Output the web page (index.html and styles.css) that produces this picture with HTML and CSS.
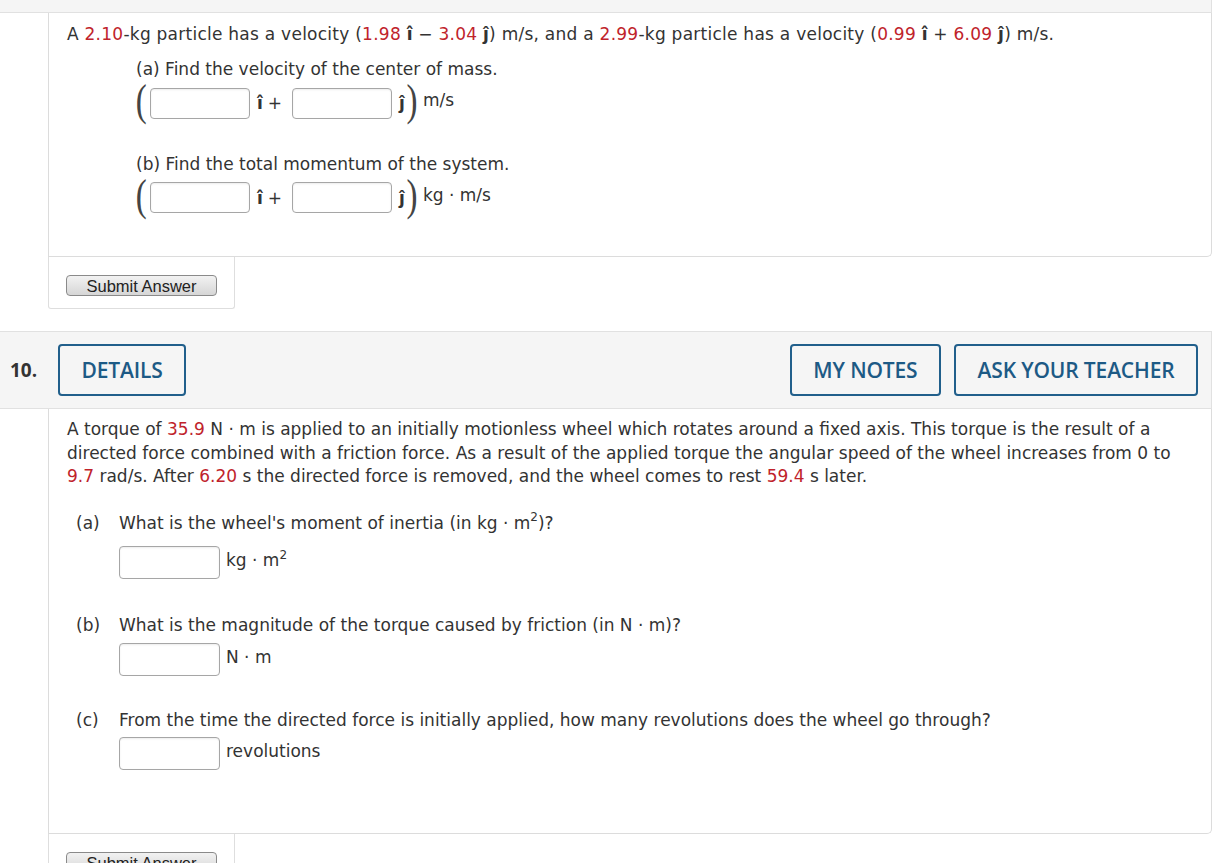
FILE: index.html
```html
<!DOCTYPE html>
<html>
<head>
<meta charset="utf-8">
<link rel="stylesheet" href="styles.css">
</head>
<body>
<div class="q">
  <div class="qhead stub"></div>
  <div class="qbody q9body">
    <p class="stem stem9">A <span class="r">2.10</span>-kg particle has a velocity (<span class="r">1.98</span> <b class="uv">î</b> − <span class="r">3.04</span> <b class="uv">ĵ</b>) m/s, and a <span class="r">2.99</span>-kg particle has a velocity (<span class="r">0.99</span> <b class="uv">î</b> + <span class="r">6.09</span> <b class="uv">ĵ</b>) m/s.</p>
    <div class="part9">
      <p class="ptext">(a) Find the velocity of the center of mass.</p>
      <div class="vec">
        <span class="paren">(</span><span class="box box9"></span><b class="uv ui">î</b><span class="plus">+</span><span class="box box9"></span><b class="uv uj">ĵ</b><span class="paren pr">)</span><span class="unit">m/s</span>
      </div>
    </div>
    <div class="part9 second">
      <p class="ptext">(b) Find the total momentum of the system.</p>
      <div class="vec">
        <span class="paren">(</span><span class="box box9"></span><b class="uv ui">î</b><span class="plus">+</span><span class="box box9"></span><b class="uv uj">ĵ</b><span class="paren pr">)</span><span class="unit">kg · m/s</span>
      </div>
    </div>
  </div>
  <div class="submit"><button class="sbtn">Submit Answer</button></div>
</div>

<div class="q q10">
  <div class="qhead main">
    <span class="qnum">10.</span>
    <span class="hbtn hfirst">DETAILS</span>
    <span class="spacer"></span>
    <span class="hbtn">MY NOTES</span>
    <span class="hbtn">ASK YOUR TEACHER</span>
  </div>
  <div class="qbody q10body">
    <p class="stem stem10">A torque of <span class="r">35.9</span> N · m is applied to an initially motionless wheel which rotates around a fixed axis. This torque is the result of a directed force combined with a friction force. As a result of the applied torque the angular speed of the wheel increases from 0 to <span class="r">9.7</span> rad/s. After <span class="r">6.20</span> s the directed force is removed, and the wheel comes to rest <span class="r">59.4</span> s later.</p>
    <div class="part pa">
      <span class="plabel">(a)</span>
      <div class="pmain">
        <p class="ptext">What is the wheel's moment of inertia (in kg · m<sup>2</sup>)?</p>
        <div class="ans"><span class="box box10"></span><span class="unit">kg · m<sup>2</sup></span></div>
      </div>
    </div>
    <div class="part pb">
      <span class="plabel">(b)</span>
      <div class="pmain">
        <p class="ptext">What is the magnitude of the torque caused by friction (in N · m)?</p>
        <div class="ans"><span class="box box10"></span><span class="unit">N · m</span></div>
      </div>
    </div>
    <div class="part pc">
      <span class="plabel">(c)</span>
      <div class="pmain">
        <p class="ptext">From the time the directed force is initially applied, how many revolutions does the wheel go through?</p>
        <div class="ans"><span class="box box10"></span><span class="unit">revolutions</span></div>
      </div>
    </div>
  </div>
  <div class="submit"><button class="sbtn">Submit Answer</button></div>
</div>
</body>
</html>
```

FILE: styles.css
```css
* { box-sizing: border-box; }
html, body { margin: 0; padding: 0; background: #fff; }
body {
  font-family: "DejaVu Sans", Verdana, sans-serif;
  font-size: 17px;
  color: #333;
  width: 1222px;
  height: 863px;
  overflow: hidden;
}
p { margin: 0; }
.r { color: #c0232b; }
.uv { font-weight: bold; }

.q { width: 1212px; }

.qhead {
  background: #f5f5f5;
  border: 1px solid #e1e1e1;
  border-left: none;
}
.qhead.stub {
  height: 13px;
  border-top: none;
}

.qbody {
  margin-left: 48px;
  border: 1px solid #dcdcdc;
  border-top: none;
  border-bottom-right-radius: 5px;
  background: #fff;
}
.q9body {
  height: 244px;
  padding: 10px 18px 0 18px;
}
.stem { line-height: 23.5px; }
.stem9 { letter-spacing: 0.25px; }

.part9 { margin-left: 69px; margin-top: 11px; }
.part9.second { margin-top: 32px; }
.part9 .ptext { line-height: 23.5px; }

.vec {
  display: flex;
  align-items: center;
  height: 36px;
  margin-top: 4px;
}
.part9.second .vec { margin-top: 3px; }
.paren {
  font-family: "Liberation Serif", serif;
  font-size: 44px;
  line-height: 36px;
  font-weight: normal;
  color: #444;
  display: inline-block;
  transform: scaleX(0.75);
  margin-top: -4px;
  width: 14px;
  text-align: center;
  margin-left: -2px;
}
.paren.pr { margin-left: 0; width: 12px; }
.box {
  display: inline-block;
  border: 1px solid #a6a6a6;
  border-radius: 4px;
  background: #fff;
  box-shadow: inset 0 1px 2px rgba(0,0,0,0.08);
}
.box9 { width: 100px; height: 31px; margin-left: 2px; }
.ui { margin-left: 7px; }
.plus { margin-left: 5px; margin-right: 8px; }
.uj { margin-left: 7px; }
.vec .unit { margin-left: 6px; margin-top: -6px; }

.submit {
  margin-left: 48px;
  width: 187px;
  height: 52px;
  border: 1px solid #dedede;
  border-top: none;
  border-bottom-left-radius: 3px;
  border-bottom-right-radius: 3px;
  padding: 18px 0 0 17px;
}
.sbtn {
  display: block;
  width: 151px;
  height: 21px;
  padding: 0;
  font-family: "Liberation Sans", Arial, sans-serif;
  font-size: 16.5px;
  color: #222;
  border: 1px solid #8a8a8a;
  border-radius: 4px;
  background: linear-gradient(#f2f2f2, #d6d6d6);
  line-height: 18px;
}

.q10 { margin-top: 22px; }
.qhead.main {
  height: 78px;
  display: flex;
  align-items: center;
  padding: 0 13px 0 10px;
  font-family: "Open Sans", sans-serif;
}
.qnum {
  font-weight: bold;
  font-size: 19px;
  color: #333;
  width: 48px;
  margin-top: -1px;
}
.spacer { flex: 1; }
.hbtn {
  display: inline-flex;
  align-items: center;
  justify-content: center;
  height: 52px;
  padding: 0 21.5px;
  border: 2px solid #215f8b;
  border-radius: 4px;
  color: #1d5a85;
  font-size: 21px;
  font-weight: 600;
  margin-left: 13px;
  letter-spacing: -0.15px;
}
.hbtn.hfirst { margin-left: 0; }

.q10body {
  height: 425px;
  padding: 9px 18px 0 18px;
}
.stem10 { width: 1125px; }

.part {
  display: flex;
  margin-left: 9px;
}
.plabel { width: 43px; line-height: 23.5px; }
.ptext { line-height: 23.5px; }
.pa { margin-top: 23px; }
.pb { margin-top: 35px; }
.pc { margin-top: 33px; }
.ans {
  display: flex;
  align-items: flex-start;
  margin-top: 5px;
}
.pa .ans { margin-top: 11px; }
.box10 { width: 101px; height: 33px; }
.ans .unit { margin-left: 6px; line-height: 23px; margin-top: 3px; }
sup { font-size: 12px; line-height: 0; vertical-align: 0; position: relative; top: -0.55em; }
.ptext sup { top: -0.6em; }
```
